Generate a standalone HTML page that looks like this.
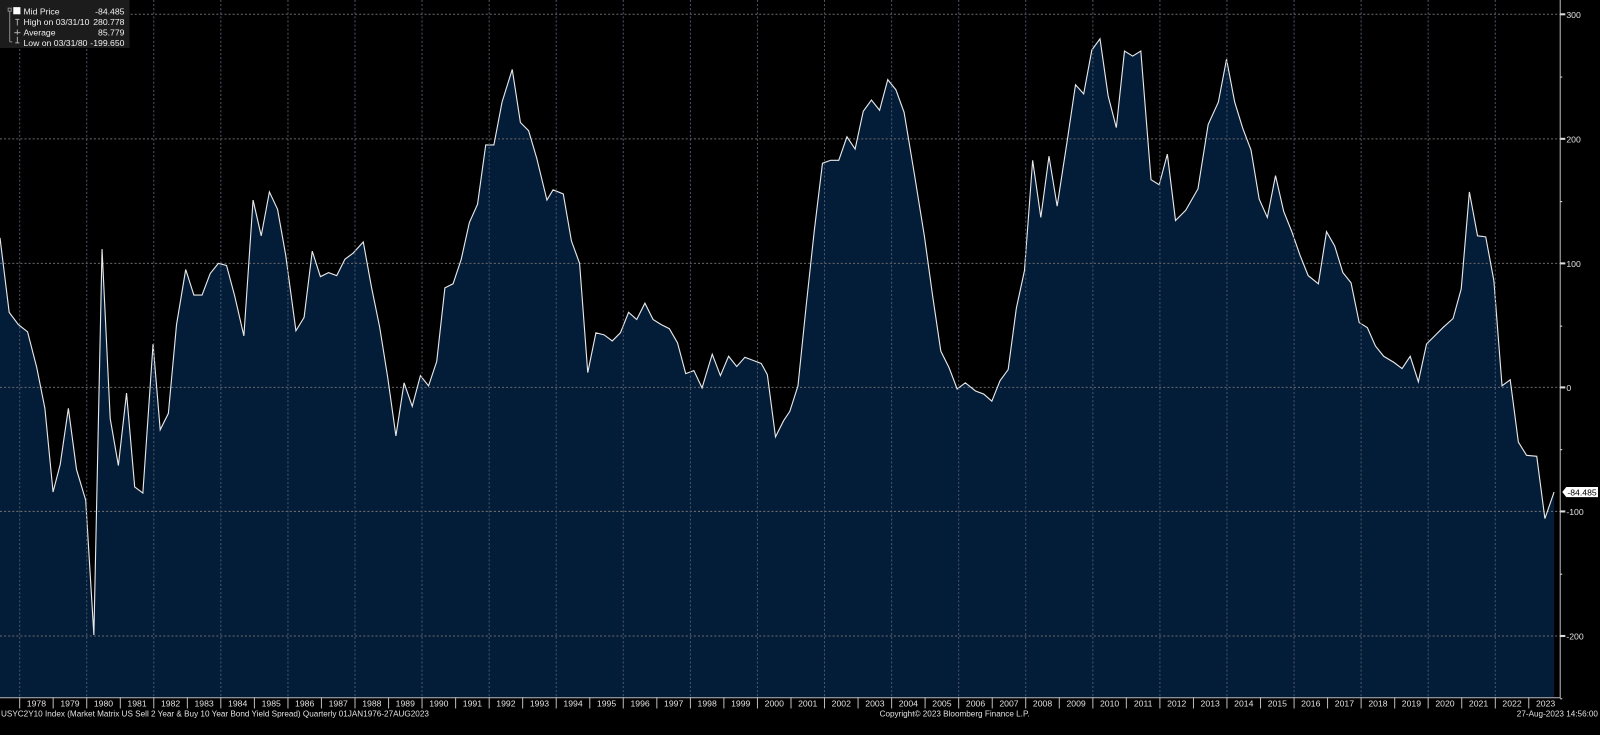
<!DOCTYPE html>
<html><head><meta charset="utf-8"><style>
html,body{margin:0;padding:0;background:#000;overflow:hidden}
svg{display:block}
text{font-family:"Liberation Sans",sans-serif;}
</style></head><body>
<svg width="1600" height="735" viewBox="0 0 1568 720" preserveAspectRatio="none" xmlns="http://www.w3.org/2000/svg">
<rect width="1568" height="720" fill="#000"/>
<polygon fill="#031c38" points="0,683 0,233 9,306 18,318 27,325 36,360 44,400 52,482 59,455 67,400 75,460 84,490 92,622 100,244 108,410 116,456 124,385 132,477 140,483 150,337 157,421 165,405 173,318 182,264 190,289 198,289 206,268 214,258 222,260 230,290 239,329 248,196 256,231 264,188 272,205 280,250 290,324 298,311 306,246 314,271 322,267 330,270 338,254 346,248 356,237 364,281 372,320 380,370 388,427 396,375 404,398 412,368 420,378 428,354 436,282 444,278 452,254 460,218 468,200 476,142 484,142 492,100 502,68 510,120 518,128 526,155 536,196 542,186 552,190 560,236 568,258 576,365 584,326 592,328 600,334 608,326 616,306 624,313 632,297 640,313 648,318 656,322 664,336 672,366 680,363 688,380 698,347 706,368 714,349 722,359 730,350 738,353 746,356 752,367 760,428 768,412 774,403 782,378 790,300 798,226 806,160 814,157 822,157 830,134 838,146 846,109 854,98 862,108 870,78 878,88 886,110 896,170 906,232 914,290 922,344 930,360 938,381 946,375 956,383 964,386 972,393 980,373 988,362 996,302 1004,265 1012,157 1020,213 1028,153 1036,202 1046,137 1054,83 1062,92 1070,49 1078,38 1086,94 1094,125 1102,50 1110,55 1118,50 1128,176 1136,181 1144,151 1152,216 1162,206 1174,185 1184,122 1194,100 1202,58 1210,100 1218,126 1226,147 1234,195 1242,213 1250,172 1258,207 1266,227 1274,250 1282,270 1292,278 1300,227 1308,241 1316,267 1324,277 1332,316 1340,321 1348,339 1356,349 1366,355 1374,361 1382,349 1390,374 1398,337 1406,329 1414,321 1424,312 1432,283 1440,188 1448,231 1456,232 1464,275 1472,378 1480,372 1488,433 1496,446 1506,447 1514,508 1523,482 1523,683"/>
<g stroke="#6a6a6a" stroke-width="1" stroke-dasharray="2,2">
<line x1="0" y1="14" x2="1529" y2="14"/>
<line x1="0" y1="136" x2="1529" y2="136"/>
<line x1="0" y1="258" x2="1529" y2="258"/>
<line x1="0" y1="379.5" x2="1529" y2="379.5"/>
<line x1="0" y1="501" x2="1529" y2="501"/>
<line x1="0" y1="623" x2="1529" y2="623"/>
</g>
<g stroke="#5a5a5a" stroke-width="1" stroke-dasharray="2,2" id="vg"></g>
<polyline fill="none" stroke="#e8e8e8" stroke-width="1.1" points="0,233 9,306 18,318 27,325 36,360 44,400 52,482 59,455 67,400 75,460 84,490 92,622 100,244 108,410 116,456 124,385 132,477 140,483 150,337 157,421 165,405 173,318 182,264 190,289 198,289 206,268 214,258 222,260 230,290 239,329 248,196 256,231 264,188 272,205 280,250 290,324 298,311 306,246 314,271 322,267 330,270 338,254 346,248 356,237 364,281 372,320 380,370 388,427 396,375 404,398 412,368 420,378 428,354 436,282 444,278 452,254 460,218 468,200 476,142 484,142 492,100 502,68 510,120 518,128 526,155 536,196 542,186 552,190 560,236 568,258 576,365 584,326 592,328 600,334 608,326 616,306 624,313 632,297 640,313 648,318 656,322 664,336 672,366 680,363 688,380 698,347 706,368 714,349 722,359 730,350 738,353 746,356 752,367 760,428 768,412 774,403 782,378 790,300 798,226 806,160 814,157 822,157 830,134 838,146 846,109 854,98 862,108 870,78 878,88 886,110 896,170 906,232 914,290 922,344 930,360 938,381 946,375 956,383 964,386 972,393 980,373 988,362 996,302 1004,265 1012,157 1020,213 1028,153 1036,202 1046,137 1054,83 1062,92 1070,49 1078,38 1086,94 1094,125 1102,50 1110,55 1118,50 1128,176 1136,181 1144,151 1152,216 1162,206 1174,185 1184,122 1194,100 1202,58 1210,100 1218,126 1226,147 1234,195 1242,213 1250,172 1258,207 1266,227 1274,250 1282,270 1292,278 1300,227 1308,241 1316,267 1324,277 1332,316 1340,321 1348,339 1356,349 1366,355 1374,361 1382,349 1390,374 1398,337 1406,329 1414,321 1424,312 1432,283 1440,188 1448,231 1456,232 1464,275 1472,378 1480,372 1488,433 1496,446 1506,447 1514,508 1523,482"/>
<!-- vertical grid every 2 years -->
<g stroke="#4a5566" stroke-width="1" stroke-dasharray="2,2">
<line x1="19.3" y1="0" x2="19.3" y2="683"/><line x1="85" y1="0" x2="85" y2="683"/><line x1="150.7" y1="0" x2="150.7" y2="683"/><line x1="216.4" y1="0" x2="216.4" y2="683"/><line x1="282.2" y1="0" x2="282.2" y2="683"/><line x1="347.9" y1="0" x2="347.9" y2="683"/><line x1="413.6" y1="0" x2="413.6" y2="683"/><line x1="479.4" y1="0" x2="479.4" y2="683"/><line x1="545.1" y1="0" x2="545.1" y2="683"/><line x1="610.8" y1="0" x2="610.8" y2="683"/><line x1="676.6" y1="0" x2="676.6" y2="683"/><line x1="742.3" y1="0" x2="742.3" y2="683"/><line x1="808" y1="0" x2="808" y2="683"/><line x1="873.8" y1="0" x2="873.8" y2="683"/><line x1="939.5" y1="0" x2="939.5" y2="683"/><line x1="1005.2" y1="0" x2="1005.2" y2="683"/><line x1="1071" y1="0" x2="1071" y2="683"/><line x1="1136.7" y1="0" x2="1136.7" y2="683"/><line x1="1202.4" y1="0" x2="1202.4" y2="683"/><line x1="1268.2" y1="0" x2="1268.2" y2="683"/><line x1="1333.9" y1="0" x2="1333.9" y2="683"/><line x1="1399.6" y1="0" x2="1399.6" y2="683"/><line x1="1465.4" y1="0" x2="1465.4" y2="683"/>
</g>
<!-- axes -->
<line x1="1529" y1="0" x2="1529" y2="684" stroke="#bbb" stroke-width="1"/>
<line x1="0" y1="683.5" x2="1529" y2="683.5" stroke="#bbb" stroke-width="1"/>
<g fill="#ddd">
<rect x="1529" y="13" width="5" height="2"/><rect x="1529" y="135" width="5" height="2"/><rect x="1529" y="257" width="5" height="2"/><rect x="1529" y="378.5" width="5" height="2"/><rect x="1529" y="500" width="5" height="2"/><rect x="1529" y="622" width="5" height="2"/>
<rect x="1529" y="75" width="2" height="1"/><rect x="1529" y="197" width="2" height="1"/><rect x="1529" y="319" width="2" height="1"/><rect x="1529" y="440" width="2" height="1"/><rect x="1529" y="562" width="2" height="1"/><rect x="1529" y="684" width="2" height="1"/>
</g>
<g fill="#e0e0e0" font-size="8.5">
<text x="1535" y="17.5">300</text><text x="1535" y="139.5">200</text><text x="1535" y="261.5">100</text><text x="1535" y="383">0</text><text x="1535" y="504.5">-100</text><text x="1535" y="626.5">-200</text>
</g>
<polygon points="1531,482 1535,477 1566,477 1566,487 1535,487" fill="#fff"/>
<text x="1536" y="485.5" font-size="8.5" fill="#000">-84.485</text>
<!-- year ticks and labels -->
<g stroke="#bbb" stroke-width="1" id="ticks">
<line x1="19.3" y1="683" x2="19.3" y2="694"/><line x1="52.1" y1="683" x2="52.1" y2="694"/><line x1="85" y1="683" x2="85" y2="694"/><line x1="117.9" y1="683" x2="117.9" y2="694"/><line x1="150.7" y1="683" x2="150.7" y2="694"/><line x1="183.6" y1="683" x2="183.6" y2="694"/><line x1="216.4" y1="683" x2="216.4" y2="694"/><line x1="249.3" y1="683" x2="249.3" y2="694"/><line x1="282.2" y1="683" x2="282.2" y2="694"/><line x1="315" y1="683" x2="315" y2="694"/><line x1="347.9" y1="683" x2="347.9" y2="694"/><line x1="380.8" y1="683" x2="380.8" y2="694"/><line x1="413.6" y1="683" x2="413.6" y2="694"/><line x1="446.5" y1="683" x2="446.5" y2="694"/><line x1="479.4" y1="683" x2="479.4" y2="694"/><line x1="512.2" y1="683" x2="512.2" y2="694"/><line x1="545.1" y1="683" x2="545.1" y2="694"/><line x1="578" y1="683" x2="578" y2="694"/><line x1="610.8" y1="683" x2="610.8" y2="694"/><line x1="643.7" y1="683" x2="643.7" y2="694"/><line x1="676.6" y1="683" x2="676.6" y2="694"/><line x1="709.4" y1="683" x2="709.4" y2="694"/><line x1="742.3" y1="683" x2="742.3" y2="694"/><line x1="775.2" y1="683" x2="775.2" y2="694"/><line x1="808" y1="683" x2="808" y2="694"/><line x1="840.9" y1="683" x2="840.9" y2="694"/><line x1="873.8" y1="683" x2="873.8" y2="694"/><line x1="906.6" y1="683" x2="906.6" y2="694"/><line x1="939.5" y1="683" x2="939.5" y2="694"/><line x1="972.4" y1="683" x2="972.4" y2="694"/><line x1="1005.2" y1="683" x2="1005.2" y2="694"/><line x1="1038.1" y1="683" x2="1038.1" y2="694"/><line x1="1071" y1="683" x2="1071" y2="694"/><line x1="1103.8" y1="683" x2="1103.8" y2="694"/><line x1="1136.7" y1="683" x2="1136.7" y2="694"/><line x1="1169.6" y1="683" x2="1169.6" y2="694"/><line x1="1202.4" y1="683" x2="1202.4" y2="694"/><line x1="1235.3" y1="683" x2="1235.3" y2="694"/><line x1="1268.2" y1="683" x2="1268.2" y2="694"/><line x1="1301" y1="683" x2="1301" y2="694"/><line x1="1333.9" y1="683" x2="1333.9" y2="694"/><line x1="1366.8" y1="683" x2="1366.8" y2="694"/><line x1="1399.6" y1="683" x2="1399.6" y2="694"/><line x1="1432.5" y1="683" x2="1432.5" y2="694"/><line x1="1465.4" y1="683" x2="1465.4" y2="694"/><line x1="1498.2" y1="683" x2="1498.2" y2="694"/>
</g>
<g fill="#e0e0e0" font-size="8.5" text-anchor="middle">
<text x="35.7" y="692">1978</text><text x="68.6" y="692">1979</text><text x="101.4" y="692">1980</text><text x="134.3" y="692">1981</text><text x="167.2" y="692">1982</text><text x="200" y="692">1983</text><text x="232.9" y="692">1984</text><text x="265.8" y="692">1985</text><text x="298.6" y="692">1986</text><text x="331.5" y="692">1987</text><text x="364.4" y="692">1988</text><text x="397.2" y="692">1989</text><text x="430.1" y="692">1990</text><text x="463" y="692">1991</text><text x="495.8" y="692">1992</text><text x="528.7" y="692">1993</text><text x="561.6" y="692">1994</text><text x="594.4" y="692">1995</text><text x="627.3" y="692">1996</text><text x="660.2" y="692">1997</text><text x="693" y="692">1998</text><text x="725.9" y="692">1999</text><text x="758.8" y="692">2000</text><text x="791.6" y="692">2001</text><text x="824.5" y="692">2002</text><text x="857.4" y="692">2003</text><text x="890.2" y="692">2004</text><text x="923.1" y="692">2005</text><text x="956" y="692">2006</text><text x="988.8" y="692">2007</text><text x="1021.7" y="692">2008</text><text x="1054.6" y="692">2009</text><text x="1087.4" y="692">2010</text><text x="1120.3" y="692">2011</text><text x="1153.2" y="692">2012</text><text x="1186" y="692">2013</text><text x="1218.9" y="692">2014</text><text x="1251.8" y="692">2015</text><text x="1284.6" y="692">2016</text><text x="1317.5" y="692">2017</text><text x="1350.4" y="692">2018</text><text x="1383.2" y="692">2019</text><text x="1416.1" y="692">2020</text><text x="1449" y="692">2021</text><text x="1481.8" y="692">2022</text><text x="1514.7" y="692">2023</text>
</g>
<g fill="#e0e0e0" font-size="8">
<text x="1" y="702">USYC2Y10 Index (Market Matrix US Sell 2 Year &amp; Buy 10 Year Bond Yield Spread)  Quarterly 01JAN1976-27AUG2023</text>
<text x="862" y="702">Copyright© 2023 Bloomberg Finance L.P.</text>
<text x="1566" y="702" text-anchor="end">27-Aug-2023 14:56:00</text>
</g>
<!-- legend -->
<rect x="0" y="0" width="127" height="47" fill="#1c1c1c"/>
<g stroke="#888" stroke-width="1" fill="none">
<rect x="8" y="8" width="3" height="3"/>
<line x1="9.5" y1="11" x2="9.5" y2="41"/><line x1="9.5" y1="41" x2="12" y2="41"/>
</g>
<rect x="13" y="7" width="7" height="7" fill="#fff"/>
<g stroke="#aaa" stroke-width="1">
<line x1="15" y1="19" x2="19" y2="19"/><line x1="17" y1="19" x2="17" y2="25"/>
<line x1="14" y1="32" x2="20" y2="32"/><line x1="17" y1="29" x2="17" y2="34"/>
<line x1="17" y1="36" x2="17" y2="42"/><line x1="15" y1="42" x2="19" y2="42"/>
</g>
<g fill="#f0f0f0" font-size="8.5">
<text x="23" y="14">Mid Price</text><text x="122" y="14" text-anchor="end">-84.485</text>
<text x="23" y="24.5">High on 03/31/10</text><text x="122" y="24.5" text-anchor="end">280.778</text>
<text x="23" y="35">Average</text><text x="122" y="35" text-anchor="end">85.779</text>
<text x="23" y="45">Low on 03/31/80</text><text x="122" y="45" text-anchor="end">-199.650</text>
</g>
</svg>
</body></html>
